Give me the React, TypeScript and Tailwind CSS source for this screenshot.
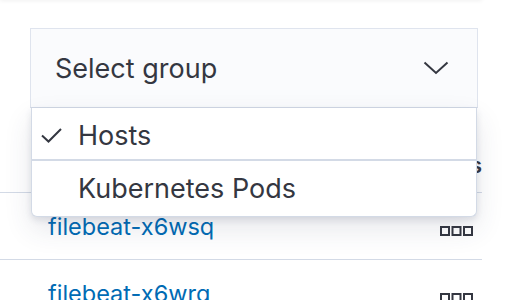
import React from 'react';

const rows = ['filebeat-x6wsq', 'filebeat-x6wrg'];

function DotsIcon() {
  return (
    <svg className="mt-[7px]" width="33" height="10" viewBox="0 0 33 10" fill="none" stroke="#343741" strokeWidth="2">
      <rect x="1" y="1" width="8" height="8" />
      <rect x="12.5" y="1" width="8" height="8" />
      <rect x="24" y="1" width="8" height="8" />
    </svg>
  );
}

export default function App() {
  return (
    <div className="relative w-[508px] h-[300px] overflow-hidden bg-white font-['Inter',sans-serif] text-[#343741]">
      {/* shadow of the panel above */}
      <div className="absolute -top-2 left-0 w-[482px] h-2 shadow-[0_1px_4px_rgba(0,0,0,0.06)]"></div>

      <div className="w-[482px]">
        <div className="pt-[28px] pl-[30px]">
          <div className="relative w-[448px]">
            <button className="flex items-center justify-between w-full h-[80px] pl-6 pr-7 bg-[#fafbfd] border border-[#dfe4ee] border-b-[#d3dae6] text-left">
              <span className="text-[27px] leading-none">Select group</span>
              <svg width="26" height="14" viewBox="0 0 26 14" fill="none" stroke="#343741" strokeWidth="2">
                <path d="M1.5 1.5 L13 12 L24.5 1.5" />
              </svg>
            </button>

            {/* dropdown */}
            <div className="absolute z-10 left-[1px] top-[80px] w-[446px] bg-white border border-t-0 border-[#d3dae6] rounded-b-[6px] shadow-[0_12px_28px_rgba(50,60,90,0.12),0_3px_6px_rgba(50,60,90,0.12)]">
              <div className="flex items-center h-[53px] pt-[3px] border-b-2 border-[#d3dae6]">
                <div className="w-[46px] pl-[9px]">
                  <svg width="21" height="15" viewBox="0 0 21 15" fill="none" stroke="#343741" strokeWidth="2">
                    <path d="M1 7.5 L7.5 13.5 L20 1" />
                  </svg>
                </div>
                <span className="text-[27px] leading-none">Hosts</span>
              </div>
              <div className="flex items-center h-[55px] pl-[46px]">
                <span className="text-[27px] leading-none">Kubernetes Pods</span>
              </div>
            </div>
          </div>
        </div>

        {/* table behind */}
        <div className="flex items-end justify-end h-[85px] pb-[16px] border-b border-[#d3dae6]">
          <span className="text-[22px] font-semibold leading-none">Actions</span>
        </div>
        {rows.map((name) => (
          <div key={name} className="flex items-center justify-between h-[67px] pt-[2px] pl-[48px] pr-[9px] border-b border-[#d3dae6]">
            <span className="text-[23.5px] leading-none text-[#006bb4]">{name}</span>
            <DotsIcon />
          </div>
        ))}
      </div>
    </div>
  );
}
